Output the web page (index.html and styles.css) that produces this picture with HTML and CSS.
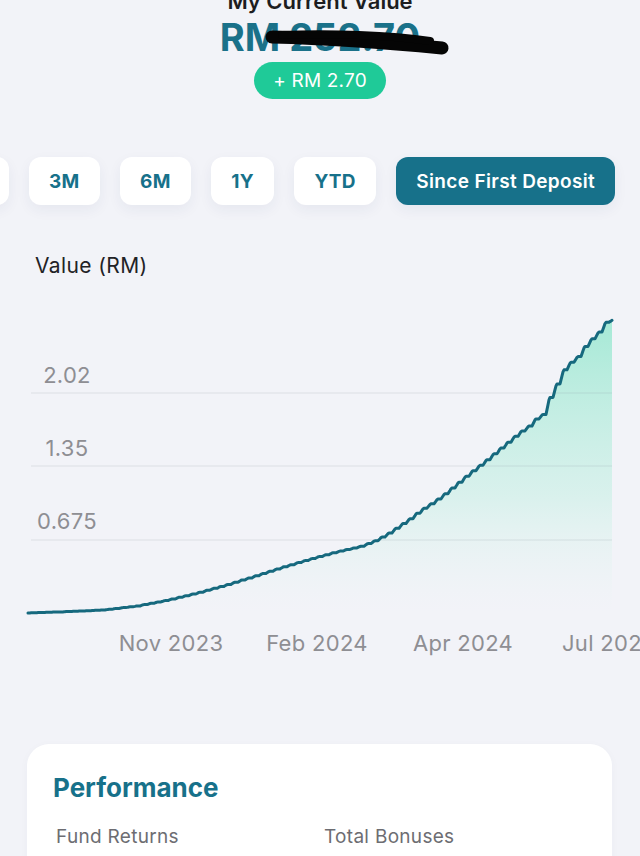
FILE: index.html
```html
<!DOCTYPE html>
<html lang="en">
<head>
    <meta charset="UTF-8">
    <meta name="viewport" content="width=device-width, initial-scale=1.0">
    <title>My Current Value</title>
    <link rel="stylesheet" href="styles.css">
</head>
<body>
    <div class="summary">
        <div class="summary-title">My Current Value</div>
        <div class="summary-amount">
            RM 252.70
            <svg class="scribble" width="200" height="30" viewBox="0 0 200 30">
                <path d="M12 10 C50 11, 110 14, 182 21" />
                <path d="M22 8 C70 6, 130 8, 170 14" class="thin" />
            </svg>
        </div>
        <div class="gain-pill">+ RM 2.70</div>
    </div>

    <div class="range-row">
        <button class="range-btn">1M</button>
        <button class="range-btn">3M</button>
        <button class="range-btn">6M</button>
        <button class="range-btn">1Y</button>
        <button class="range-btn">YTD</button>
        <button class="range-btn active">Since First Deposit</button>
    </div>

    <div class="chart-label">Value (RM)</div>
    <svg class="chart" width="640" height="380" viewBox="0 280 640 380">
        <defs>
            <linearGradient id="area-fill" x1="0" y1="320" x2="0" y2="612" gradientUnits="userSpaceOnUse">
                <stop offset="0" stop-color="#9de8d2" stop-opacity="0.9" />
                <stop offset="0.6" stop-color="#c4efe3" stop-opacity="0.55" />
                <stop offset="1" stop-color="#e4f5f0" stop-opacity="0" />
            </linearGradient>
        </defs>
        <path id="chart-area" fill="url(#area-fill)" d="" />
        <line class="grid" x1="31" y1="393" x2="612" y2="393" />
        <line class="grid" x1="31" y1="466" x2="612" y2="466" />
        <line class="grid" x1="31" y1="540" x2="612" y2="540" />
        <path id="chart-line" class="line" d="" />
        <text class="axis" x="67" y="383" text-anchor="middle">2.02</text>
        <text class="axis" x="67" y="456" text-anchor="middle">1.35</text>
        <text class="axis" x="67" y="529" text-anchor="middle">0.675</text>
        <text class="axis" x="171" y="651" text-anchor="middle">Nov 2023</text>
        <text class="axis" x="317" y="651" text-anchor="middle">Feb 2024</text>
        <text class="axis" x="463" y="651" text-anchor="middle">Apr 2024</text>
        <text class="axis" x="562" y="651">Jul 2024</text>
    </svg>

    <div class="card">
        <div class="card-title">Performance</div>
        <div class="card-cols">
            <div class="card-label">Fund Returns</div>
            <div class="card-label">Total Bonuses</div>
        </div>
    </div>

    <script src="chart.js"></script>
</body>
</html>
```

FILE: styles.css
```css
body {
    margin: 0;
    background-color: #f2f3f8;
    font-family: Inter, "Noto Sans", sans-serif;
    overflow: hidden;
}
.summary {
    display: flex;
    flex-direction: column;
    align-items: center;
    margin-top: -13px;
}
.summary-title {
    font-size: 22px;
    line-height: 28px;
    font-weight: 600;
    color: #1d1d1f;
}
.summary-amount {
    position: relative;
    font-size: 38px;
    line-height: 44px;
    font-weight: 700;
    color: #1a7189;
}
.scribble {
    position: absolute;
    left: 40px;
    top: 12px;
    overflow: visible;
}
.scribble path {
    fill: none;
    stroke: #050505;
    stroke-width: 13;
    stroke-linecap: round;
}
.scribble path.thin {
    stroke-width: 8;
}
.gain-pill {
    margin-top: 3px;
    height: 37px;
    line-height: 37px;
    padding: 0 19px;
    border-radius: 19px;
    background-color: #1fca98;
    color: #fff;
    font-size: 19px;
    letter-spacing: 0.2px;
}
.range-row {
    display: flex;
    gap: 20.5px;
    margin: 58px 0 0 -58px;
}
.range-btn {
    flex: none;
    height: 48px;
    padding: 0 20px;
    border: none;
    border-radius: 12px;
    background-color: #fff;
    color: #17718a;
    font-family: Inter, sans-serif;
    font-size: 19px;
    font-weight: 700;
    letter-spacing: 0.3px;
    box-shadow: 0 5px 14px rgba(40, 50, 100, 0.06);
}
.range-btn.active {
    background-color: #17718a;
    color: #fff;
    font-weight: 600;
    letter-spacing: 0.35px;
}
.chart-label {
    margin: 49px 0 0 35px;
    font-size: 21px;
    line-height: 24px;
    letter-spacing: 0.4px;
    color: #222226;
}
.chart {
    display: block;
    margin-top: 2px;
}
.chart .grid {
    stroke: #8a96a0;
    stroke-opacity: 0.1;
    stroke-width: 2;
}
.chart .line {
    fill: none;
    stroke: #16697e;
    stroke-width: 3;
    stroke-linejoin: round;
    stroke-linecap: round;
}
.chart .axis {
    font-family: Inter, sans-serif;
    font-size: 22px;
    letter-spacing: 0.3px;
    fill: #8e8e93;
}
.card {
    margin: 84px 28px 0 27px;
    padding: 27px 26px 30px;
    background-color: #fff;
    border-radius: 22px;
    box-shadow: 0 2px 10px rgba(40, 50, 100, 0.03);
}
.card-title {
    font-size: 26px;
    line-height: 34px;
    font-weight: 700;
    color: #17718a;
}
.card-cols {
    display: grid;
    grid-template-columns: 268px 1fr;
    margin-top: 20px;
    padding-left: 3px;
}
.card-label {
    font-size: 19px;
    line-height: 24px;
    letter-spacing: 0.3px;
    color: #6d6d72;
}
```

FILE: chart.js
```js
const anchors = [
    [28, 613], [60, 612], [106, 610], [140, 606], [171, 600], [200, 593],
    [229, 585], [258, 576], [286, 567], [310, 560], [335, 553], [365, 546],
    [380, 540], [392, 533], [404, 525], [414, 518], [424, 510], [437, 502],
    [449, 493], [461, 483], [473, 473], [486, 463], [498, 453], [510, 443],
    [522, 433], [535, 424], [542, 415], [549, 414], [552, 400], [557, 387],
    [562, 382], [565, 372], [573, 363], [583, 355], [590, 343], [596, 338],
    [600, 336], [604, 328], [608, 323], [612, 320]
];
const startX = 28;
const endX = 612;
const step = 7;

function baseY(x) {
    for (let i = 1; i < anchors.length; i++) {
        const [x1, y1] = anchors[i];
        const [x0, y0] = anchors[i - 1];
        if (x <= x1) {
            return y0 + (y1 - y0) * (x - x0) / (x1 - x0);
        }
    }
    return anchors[anchors.length - 1][1];
}

const points = [];
for (let x = startX; x <= endX; x++) {
    const x0 = startX + Math.floor((x - startX) / step) * step;
    const x1 = Math.min(x0 + step, endX);
    const t = (x - x0) / step;
    const e = Math.min(1, t / 0.5);
    const y = baseY(x0) + (baseY(x1) - baseY(x0)) * e;
    points.push(`${x},${y.toFixed(1)}`);
}

const line = 'M' + points.join(' L');
document.getElementById('chart-line').setAttribute('d', line);
document.getElementById('chart-area').setAttribute('d', `${line} L${endX},615 L${startX},615 Z`);
```
